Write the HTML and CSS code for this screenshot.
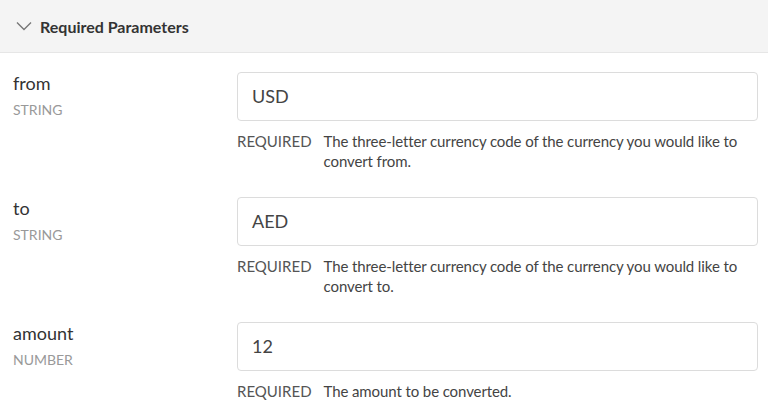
FILE: index.html
```html
<!DOCTYPE html>
<html>
<head>
<meta charset="utf-8">
<link rel="stylesheet" href="styles.css">
</head>
<body>
<div class="section">
  <div class="header">
    <svg class="chev" width="16" height="10" viewBox="0 0 16 10"><path d="M1 1.5 L8 8.5 L15 1.5" fill="none" stroke="#777" stroke-width="1.4"/></svg>
    <span class="title">Required Parameters</span>
  </div>
  <div class="params">
    <div class="param">
      <div class="label">
        <div class="name">from</div>
        <div class="type">STRING</div>
      </div>
      <div class="field">
        <div class="input">USD</div>
        <div class="desc"><span class="req">REQUIRED</span><span class="text">The three-letter currency code of the currency you would like to convert from.</span></div>
      </div>
    </div>
    <div class="param">
      <div class="label">
        <div class="name">to</div>
        <div class="type">STRING</div>
      </div>
      <div class="field">
        <div class="input">AED</div>
        <div class="desc"><span class="req">REQUIRED</span><span class="text">The three-letter currency code of the currency you would like to convert to.</span></div>
      </div>
    </div>
    <div class="param">
      <div class="label">
        <div class="name">amount</div>
        <div class="type">NUMBER</div>
      </div>
      <div class="field">
        <div class="input">12</div>
        <div class="desc"><span class="req">REQUIRED</span><span class="text">The amount to be converted.</span></div>
      </div>
    </div>
  </div>
</div>
</body>
</html>
```
FILE: styles.css
```css
html, body { margin: 0; padding: 0; background: #fff; }
body { font-family: Lato, "Open Sans", sans-serif; color: #333; width: 768px; height: 410px; overflow: hidden; }
.header {
  height: 52px;
  background: #f4f4f4;
  border-bottom: 1px solid #e6e6e6;
  display: flex;
  align-items: center;
  padding-left: 16px;
}
.chev { margin-right: 8px; margin-top: -1px; }
.title { font-size: 16px; font-weight: 700; color: #333; }
.params { padding: 19px 10px 0 13px; }
.param { display: flex; margin-bottom: 26px; }
.label { width: 224px; }
.name { font-size: 18px; line-height: 22px; color: #333; }
.type { font-size: 14px; line-height: 18px; color: #999; margin-top: 7px; }
.field { flex: 1; }
.input {
  height: 47px;
  border: 1px solid #dcdcdc;
  border-radius: 4px;
  box-sizing: content-box;
  padding-left: 14px;
  font-size: 18px;
  line-height: 47px;
  color: #444;
}
.desc { display: flex; margin-top: 10px; font-size: 15px; line-height: 20px; color: #444; }
.req { flex-shrink: 0; color: #555; margin-right: 12px; }
.text { flex: 1; padding-right: 12px; letter-spacing: -0.1px; }
```
